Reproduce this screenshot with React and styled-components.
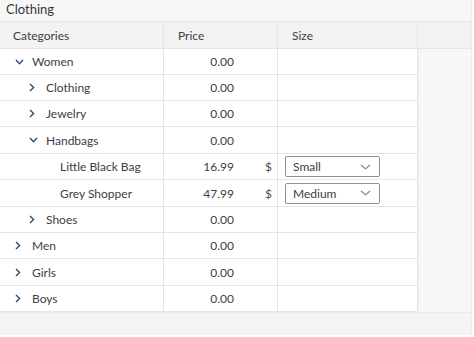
import React from "react";
import styled, { createGlobalStyle } from "styled-components";

const Global = createGlobalStyle`
  html, body { margin: 0; padding: 0; background: #fff; }
  body { font-family: Lato, "Noto Sans", Arial, sans-serif; color: #32363a; }
`;

const Panel = styled.div`
  width: 472px;
  height: 335px;
  background: #f7f7f7;
  display: flex;
  flex-direction: column;
  border-right: 1px solid #ececec;
  box-sizing: border-box;
`;

const Title = styled.div`
  height: 22px;
  line-height: 18px;
  padding-left: 6px;
  font-size: 13px;
  color: #32363a;
  background: #f7f7f7;
  border-bottom: 1px solid #e5e5e5;
  box-sizing: border-box;
`;

const Row = styled.div`
  display: grid;
  grid-template-columns: 164px 114px 140px 1fr;
  height: ${(p) => p.$h || 26}px;
  box-sizing: border-box;
`;

const HeadCell = styled.div`
  background: #f2f2f2;
  border-bottom: 1px solid #e5e5e5;
  border-right: 1px solid #e5e5e5;
  display: flex;
  align-items: center;
  padding-left: ${(p) => p.$pl ?? 14}px;
  font-size: 12px;
  color: #3b4046;
  &:last-child { border-right: none; }
`;

const Cell = styled.div`
  background: #fff;
  border-bottom: 1px solid #e5e5e5;
  border-right: 1px solid #e5e5e5;
  display: flex;
  align-items: center;
  font-size: 12px;
  color: #3b4046;
  box-sizing: border-box;
`;

const Filler = styled.div`
  background: #f7f7f7;
  border-left: 1px solid #ececec;
`;

const TreeCell = styled(Cell)`
  padding-left: ${(p) => p.$indent}px;
`;

const Toggle = styled.span`
  width: 17px;
  display: inline-flex;
  align-items: center;
  justify-content: flex-start;
`;

const PriceCell = styled(Cell)`
  justify-content: flex-start;
`;

const Amount = styled.span`
  width: 70px;
  text-align: right;
`;

const Currency = styled.span`
  margin-left: 31px;
  color: #4a4f55;
`;

const SizeCell = styled(Cell)`
  padding-left: 7px;
`;

const Select = styled.div`
  width: 95px;
  height: 21px;
  box-sizing: border-box;
  border: 1px solid #89919a;
  border-radius: 2px;
  background: #fff;
  display: flex;
  align-items: center;
  justify-content: space-between;
  padding: 0 8px 0 7px;
  font-size: 12px;
  color: #3b4046;
`;

const Footer = styled.div`
  flex: 1;
  background: #f4f4f4;
  border-top: 1px solid #ececec;
`;

const Down = ({ color = "#2b4d73", w = 9, sw = 1.4 }) => (
  <svg width={w} height="6" viewBox={`0 0 ${w} 6`}>
    <path d={`M1 1 L${w / 2} 4.8 L${w - 1} 1`} fill="none" stroke={color} strokeWidth={sw} />
  </svg>
);

const Right = () => (
  <svg width="6" height="9" viewBox="0 0 6 9">
    <path d="M1 1 L4.6 4.5 L1 8" fill="none" stroke="#2b4d73" strokeWidth="1.4" />
  </svg>
);

const rows = [
  { label: "Women", level: 0, state: "open", price: "0.00" },
  { label: "Clothing", level: 1, state: "closed", price: "0.00" },
  { label: "Jewelry", level: 1, state: "closed", price: "0.00" },
  { label: "Handbags", level: 1, state: "open", price: "0.00", h: 27 },
  { label: "Little Black Bag", level: 2, price: "16.99", cur: "$", size: "Small" },
  { label: "Grey Shopper", level: 2, price: "47.99", cur: "$", size: "Medium", h: 27 },
  { label: "Shoes", level: 1, state: "closed", price: "0.00" },
  { label: "Men", level: 0, state: "closed", price: "0.00" },
  { label: "Girls", level: 0, state: "closed", price: "0.00", h: 27 },
  { label: "Boys", level: 0, state: "closed", price: "0.00" },
];

export default function App() {
  return (
    <>
      <Global />
      <Panel>
        <Title>Clothing</Title>
        <Row $h={27}>
          <HeadCell $pl={13}>Categories</HeadCell>
          <HeadCell>Price</HeadCell>
          <HeadCell>Size</HeadCell>
          <HeadCell />
        </Row>
        {rows.map((r) => (
          <Row key={r.label} $h={r.h}>
            <TreeCell $indent={15 + r.level * 14}>
              <Toggle>
                {r.state === "open" && <Down />}
                {r.state === "closed" && <Right />}
              </Toggle>
              {r.label}
            </TreeCell>
            <PriceCell>
              <Amount>{r.price}</Amount>
              {r.cur && <Currency>{r.cur}</Currency>}
            </PriceCell>
            <SizeCell>
              {r.size && (
                <Select>
                  {r.size}
                  <Down color="#7a8087" w={11} sw={1.1} />
                </Select>
              )}
            </SizeCell>
            <Filler />
          </Row>
        ))}
        <Footer />
      </Panel>
    </>
  );
}
